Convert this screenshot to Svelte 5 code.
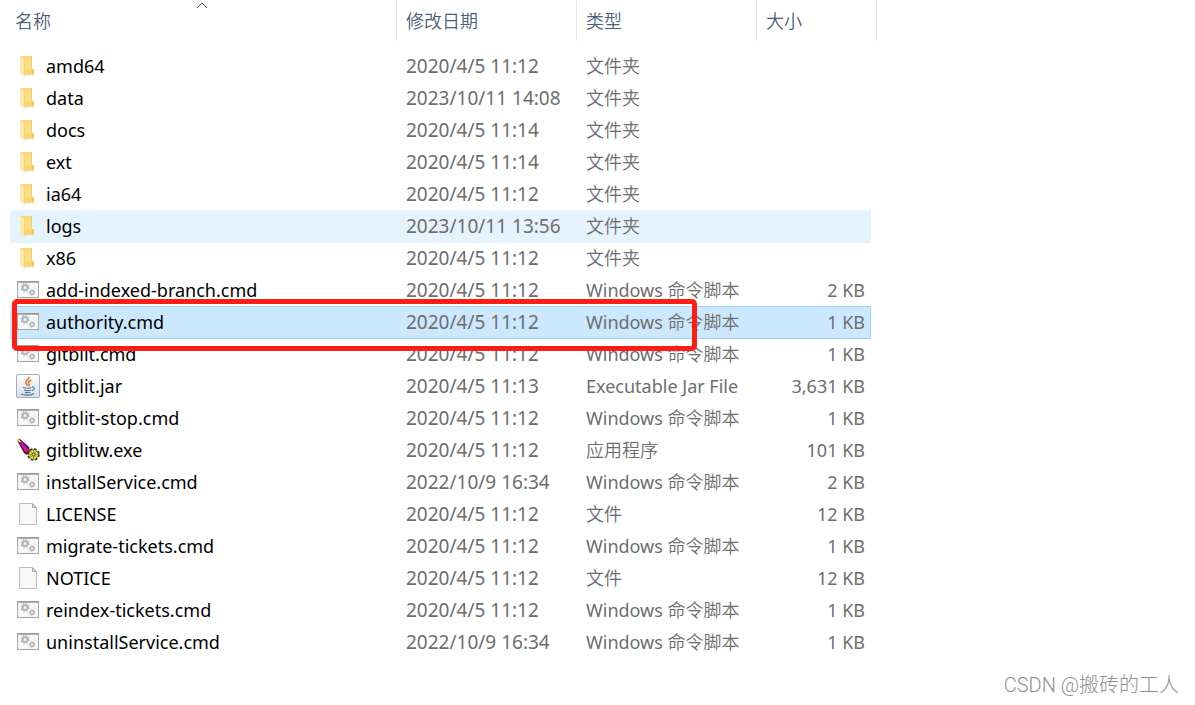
<script>
  const files = [
    ['folder', 'amd64', '2020/4/5 11:12', '', '文件夹', ''],
    ['folder', 'data', '2023/10/11 14:08', '', '文件夹', ''],
    ['folder', 'docs', '2020/4/5 11:14', '', '文件夹', ''],
    ['folder', 'ext', '2020/4/5 11:14', '', '文件夹', ''],
    ['folder', 'ia64', '2020/4/5 11:12', '', '文件夹', ''],
    ['folder', 'logs', '2023/10/11 13:56', '', '文件夹', ''],
    ['folder', 'x86', '2020/4/5 11:12', '', '文件夹', ''],
    ['cmd', 'add-indexed-branch.cmd', '2020/4/5 11:12', 'Windows', '命令脚本', '2 KB'],
    ['cmd', 'authority.cmd', '2020/4/5 11:12', 'Windows', '命令脚本', '1 KB'],
    ['cmd', 'gitblit.cmd', '2020/4/5 11:12', 'Windows', '命令脚本', '1 KB'],
    ['jar', 'gitblit.jar', '2020/4/5 11:13', 'Executable Jar File', '', '3,631 KB'],
    ['cmd', 'gitblit-stop.cmd', '2020/4/5 11:12', 'Windows', '命令脚本', '1 KB'],
    ['exe', 'gitblitw.exe', '2020/4/5 11:12', '', '应用程序', '101 KB'],
    ['cmd', 'installService.cmd', '2022/10/9 16:34', 'Windows', '命令脚本', '2 KB'],
    ['file', 'LICENSE', '2020/4/5 11:12', '', '文件', '12 KB'],
    ['cmd', 'migrate-tickets.cmd', '2020/4/5 11:12', 'Windows', '命令脚本', '1 KB'],
    ['file', 'NOTICE', '2020/4/5 11:12', '', '文件', '12 KB'],
    ['cmd', 'reindex-tickets.cmd', '2020/4/5 11:12', 'Windows', '命令脚本', '1 KB'],
    ['cmd', 'uninstallService.cmd', '2022/10/9 16:34', 'Windows', '命令脚本', '1 KB']
  ].map(([icon, name, date, latin, local, size]) => ({ icon, name, date, latin, local, size }));

  const hovered = 'logs';
  const selected = 'authority.cmd';
</script>

{#snippet fileIcon(kind)}
  <svg class="icon" viewBox="0 0 24 24" aria-hidden="true">
    {#if kind === 'folder'}
      <path d="M5 2h11v13l2 1v5H8z" fill="#f7d672" />
      <path d="M9 3h7v13H9z" fill="#f9dc84" />
      <path d="M15 3h1v12h2v5h-2z" fill="#f0c75c" />
      <path d="M4 2l5 3v17.500l-5-2.500z" fill="#fee9a6" />
      <path d="M8.500 5v17" stroke="#efcb67" stroke-width=".8" />
    {:else if kind === 'cmd'}
      <rect x="1.500" y="3.500" width="21" height="16" fill="#f6f6f6" stroke="#a3a8ab" />
      <path d="M1 4h22" stroke="#92989c" stroke-width="1.500" />
      <g fill="none" stroke="#aeb7be">
        <circle cx="9" cy="9.500" r="2.500" stroke-width="2" />
        <circle cx="9" cy="9.500" r="4" stroke-width="1.200" stroke-dasharray="1.570 1.570" />
        <circle cx="16" cy="14.500" r="1.700" stroke-width="1.500" />
        <circle cx="16" cy="14.500" r="2.800" stroke-width="1" stroke-dasharray="1.260 .94" />
      </g>
    {:else if kind === 'jar'}
      <defs>
        <linearGradient id="jar-bg" x1="0" y1="0" x2="0" y2="1">
          <stop offset="0" stop-color="#fff" />
          <stop offset="1" stop-color="#d5dfe8" />
        </linearGradient>
      </defs>
      <rect x=".5" y=".5" width="23" height="23" rx="1.500" fill="url(#jar-bg)" stroke="#a5afb9" />
      <path d="M13 2.500c1 3-5 4-3 7 .4.900 1.500 1.500 1.500 2.500M15.500 6c-3 1-4 2.500-2.500 4 .7.800 0 1.700-.5 2" fill="none" stroke="#e8772e" stroke-width="1.500" />
      <path d="M7 13.500c2 .8 6.500.8 8.500 0M8 16c2 .7 5 .7 7 0M9 18.300c2 .5 4 .5 5.500 0M5 20c3 1.500 10 1.500 13-.5M16 13c3-.6 3 2.500 0 3.500" fill="none" stroke="#527b9e" stroke-width="1.200" />
    {:else if kind === 'exe'}
      <path d="M1 1h3l9 8 1 4-3 4-3-2-5-9z" fill="#301048" />
      <path d="M3 4l2-1 8 9-2 3-3-3z" fill="#f50a85" />
      <path d="M4 4l2 0 6 6-1 2z" fill="#8a20d8" />
      <path d="M5 6l6 7-1 1z" fill="#ff2036" />
      <path d="M1 1h2l2 3-2 0z" fill="#fff22c" />
      <circle cx="17.500" cy="16.500" r="5" fill="none" stroke="#29290b" stroke-width="2.600" stroke-dasharray="2.200 1.730" />
      <circle cx="17.500" cy="16.500" r="4.800" fill="#e5de48" stroke="#5d5a16" stroke-width=".8" />
      <path d="M17.500 12.500v8M13.500 16.500h8M14.700 13.700l5.600 5.600M20.300 13.700l-5.600 5.600" stroke="#77731c" stroke-width=".7" />
      <circle cx="17.500" cy="16.500" r="1.500" fill="#fffbb0" stroke="#35350b" />
    {:else}
      <path d="M3.500 1.500h13l4 4v17h-17z" fill="#f8f8f8" stroke="#bcbcbc" />
      <path d="M16.500 1.500v4h4z" fill="#e4e4e4" stroke="#a8a8a8" />
    {/if}
  </svg>
{/snippet}

<main>
  <table>
    <colgroup>
      <col class="name-col" /><col class="wide-col" /><col class="wide-col" /><col class="size-col" /><col class="end-col" />
    </colgroup>
    <thead>
      <tr>
        <th aria-sort="ascending">
          <svg class="sort" viewBox="0 0 12 7" aria-hidden="true"><path d="M1 6l5-5 5 5" fill="none" stroke="#555" /></svg>
          <button>名称</button>
        </th>
        <th><button>修改日期</button></th>
        <th><button>类型</button></th>
        <th colspan="2"><button>大小</button></th>
      </tr>
    </thead>
    <tbody>
      {#each files as file}
        <tr class:hovered={file.name === hovered} class:selected={file.name === selected}>
          <td class="name">
            <div class="label">{@render fileIcon(file.icon)}<span>{file.name}</span></div>
            {#if file.name === selected}<div class="marker"></div>{/if}
          </td>
          <td class="date">{file.date}</td>
          <td>{file.latin} <span class="cjk">{file.local}</span></td>
          <td class="size">{file.size}</td>
        </tr>
      {/each}
    </tbody>
  </table>
  <footer>CSDN @搬砖的工人</footer>
</main>

<style>
  :global(body) {
    margin: 0;
    background: #fff;
  }
  main {
    display: flex;
    flex-direction: column;
    align-items: flex-start;
    padding-left: 10px;
    font-family: 'Noto Sans', 'Noto Sans CJK SC', sans-serif;
    font-size: 18px;
    color: #6d6d6d;
  }
  table {
    table-layout: fixed;
    width: 867px;
    border-spacing: 0;
  }
  .name-col { width: 387px; }
  .wide-col { width: 180px; }
  .size-col { width: 114px; }
  .end-col { width: 6px; }
  th {
    position: relative;
    height: 42px;
    padding: 0;
    text-align: left;
    vertical-align: top;
    background: linear-gradient(#e5e5e5, #e5e5e5) right / 1px 40px no-repeat;
  }
  button {
    display: block;
    width: 100%;
    padding: 0 9px;
    border: 0;
    background: none;
    color: #4c607a;
    font-family: 'Noto Sans CJK SC', sans-serif;
    font-size: 18px;
    font-weight: 350;
    line-height: 40px;
    text-align: left;
  }
  th:first-child button { padding-left: 5px; }
  .sort {
    position: absolute;
    top: 2px;
    left: calc(50% - 8px);
    width: 12px;
    height: 7px;
  }
  tbody::before {
    content: '';
    display: block;
    height: 8px;
  }
  td {
    box-sizing: border-box;
    height: 32px;
    padding: 0 9px;
    line-height: 28px;
    white-space: nowrap;
  }
  .name {
    position: relative;
    padding-left: 6px;
    color: #000;
  }
  .label {
    display: flex;
    align-items: center;
    gap: 6px;
    line-height: 30px;
  }
  .icon {
    width: 24px;
    height: 24px;
  }
  .date {
    font-size: 19px;
  }
  .cjk {
    font-family: 'Noto Sans CJK SC', sans-serif;
    font-weight: 350;
    line-height: 20px;
  }
  .size {
    padding-right: 6px;
    text-align: right;
  }
  .hovered td {
    background: #e5f3ff;
    box-shadow: 0 1px #e5f3ff;
  }
  .selected td {
    background: #cce8ff;
    box-shadow: 0 1px #99d1ff, inset 0 1px #99d1ff;
  }
  .selected .size {
    border-right: 1px solid #99d1ff;
    padding-right: 5px;
  }
  .marker {
    position: absolute;
    z-index: 1;
    top: -7px;
    left: 2px;
    box-sizing: border-box;
    width: 685px;
    height: 52px;
    border: 5px solid #ff1e14;
    border-radius: 5px;
    pointer-events: none;
  }
  footer {
    align-self: flex-end;
    padding: 12px 16px 0 0;
    color: #8f8f8f;
    font-family: Roboto, 'Noto Sans CJK SC', sans-serif;
    font-size: 20px;
    font-weight: 300;
    line-height: 30px;
  }
</style>
